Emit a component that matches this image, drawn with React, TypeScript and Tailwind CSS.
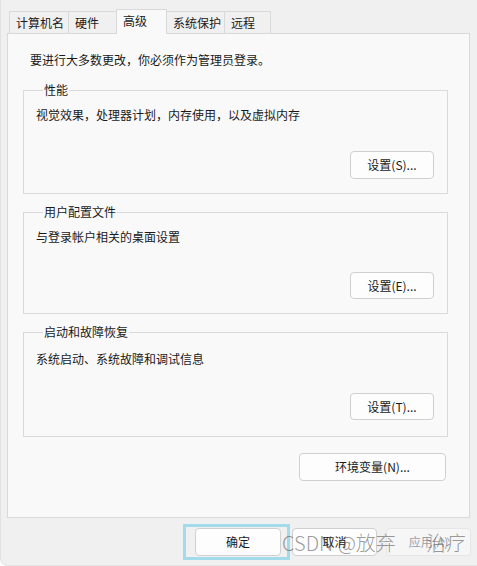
import React from 'react';

const font = "font-['Microsoft_YaHei','Noto_Sans_CJK_SC',sans-serif]";

const tabs = [
  { label: '计算机名', w: 'w-[60px]' },
  { label: '硬件', w: 'w-[49px]' },
  { label: '高级', w: 'w-[51px]', active: true },
  { label: '系统保护', w: 'w-[59px]' },
  { label: '远程', w: 'w-[47px]' },
];

function Button({ children, className = '', disabled = false }: { children: React.ReactNode; className?: string; disabled?: boolean }) {
  return (
    <button
      className={
        'flex items-center justify-center rounded-[4px] border text-[12px] leading-[16px] ' +
        (disabled
          ? 'border-[#e6e6e6] bg-[#f6f6f6] text-[#9aa0a8] '
          : 'border-[#d0d0d0] bg-[#fdfdfd] text-[#1a1a1a] ') +
        className
      }
    >
      {children}
    </button>
  );
}

interface GroupProps {
  title: string;
  desc: string;
  action: string;
  descMt: string;
  btnMt: string;
  pb: string;
  btnH: string;
  className?: string;
}

function Group({ title, desc, action, descMt, btnMt, pb, btnH, className = '' }: GroupProps) {
  return (
    <fieldset className={'border border-[#dadada] pl-[12px] pr-[13px] ' + pb + ' ' + className}>
      <legend className="ml-[7px] px-[1px] text-[12px] leading-[16px] text-[#1a1a1a]">{title}</legend>
      <p className={'text-[12px] leading-[16px] text-[#1a1a1a] ' + descMt}>{desc}</p>
      <div className={'flex justify-end ' + btnMt}>
        <Button className={'w-[84px] ' + btnH}>{action}</Button>
      </div>
    </fieldset>
  );
}

export default function App() {
  return (
    <div className={'relative h-[566px] w-[477px] overflow-hidden rounded-bl-[8px] border-l border-b border-[#e2e2e2] bg-[#f0f0f0] ' + font}>
      {/* Tab strip */}
      <div className="flex items-end pl-[8px] pt-[9px]">
        {tabs.map((t, i) => (
          <div
            key={t.label}
            className={
              'flex items-center border-x border-t border-[#d9d9d9] pl-[6px] text-[12px] leading-[16px] text-[#1a1a1a] ' +
              t.w +
              (i > 0 ? ' -ml-px' : '') +
              (t.active ? ' relative z-10 -mb-px h-[25px] bg-[#f9f9f9] pb-[3px]' : ' h-[22px] bg-[#f0f0f0]')
            }
          >
            {t.label}
          </div>
        ))}
      </div>

      {/* Tab page */}
      <div className="ml-[6px] flex h-[485px] w-[463px] flex-col border border-[#d9d9d9] bg-[#f9f9f9] pl-[15px] pr-[21px]">
        <p className="pl-[7px] pt-[18px] text-[12px] leading-[16px] text-[#1a1a1a]">要进行大多数更改，你必须作为管理员登录。</p>

        <Group
          className="mt-[14px]"
          title="性能"
          desc="视觉效果，处理器计划，内存使用，以及虚拟内存"
          action="设置(S)..."
          descMt="mt-[9px]"
          btnMt="mt-[28px]"
          btnH="h-[28px]"
          pb="pb-[14px]"
        />
        <Group
          className="mt-[10px]"
          title="用户配置文件"
          desc="与登录帐户相关的桌面设置"
          action="设置(E)..."
          descMt="mt-[9px]"
          btnMt="mt-[27px]"
          btnH="h-[27px]"
          pb="pb-[14px]"
        />
        <Group
          className="mt-[10px]"
          title="启动和故障恢复"
          desc="系统启动、系统故障和调试信息"
          action="设置(T)..."
          descMt="mt-[11px]"
          btnMt="mt-[26px]"
          btnH="h-[27px]"
          pb="pb-[16px]"
        />

        <div className="mt-[16px] flex justify-end pr-[2px]">
          <Button className="h-[28px] w-[147px]">环境变量(N)...</Button>
        </div>
      </div>

      {/* Dialog buttons */}
      <div className="mt-[6px] flex items-center pl-[182px]">
        <div className="border-[3px] border-[#a3dbea] pb-[1px] pl-[9px] pr-[6px] pt-[1px]">
          <Button className="h-[28px] w-[86px]">确定</Button>
        </div>
        <Button className="ml-[2px] h-[28px] w-[85px]">取消</Button>
        <Button disabled className="ml-[9px] h-[28px] w-[85px]">应用(A)</Button>
      </div>

      {/* Watermark */}
      <div className="pointer-events-none absolute left-[281px] top-[531px] flex font-['Noto_Sans_CJK_SC',sans-serif] text-[20px] leading-[24px] font-light text-[rgba(70,70,70,0.55)]">
        <span>CSDN @放弃</span>
        <span className="ml-[30px]">治疗</span>
      </div>
    </div>
  );
}
